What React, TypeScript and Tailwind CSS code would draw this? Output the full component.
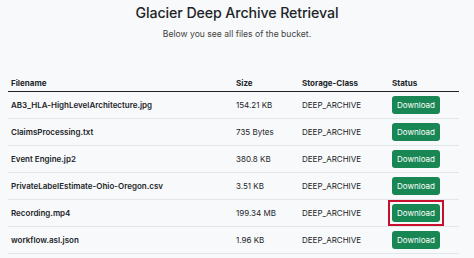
import React from "react";

const rows = [
  { name: "AB3_HLA-HighLevelArchitecture.jpg", size: "154.21 KB" },
  { name: "ClaimsProcessing.txt", size: "735 Bytes" },
  { name: "Event Engine.jp2", size: "380.8 KB" },
  { name: "PrivateLabelEstimate-Ohio-Oregon.csv", size: "3.51 KB" },
  { name: "Recording.mp4", size: "199.34 MB", highlight: true },
  { name: "workflow.asl.json", size: "1.96 KB" },
];

export default function App() {
  return (
    <div
      className="w-[474px] h-[258px] bg-[#f8f9fa] overflow-hidden text-[#212529]"
      style={{ fontFamily: "Inter, 'Liberation Sans', sans-serif" }}
    >
      <div className="flex flex-col items-center pt-[3px]">
        <h1 className="text-[14.2px] leading-[20px] font-medium tracking-[-0.1px]">Glacier Deep Archive Retrieval</h1>
        <p className="text-[8.6px] leading-[14px] mt-[4px] text-[#444]">Below you see all files of the bucket.</p>
      </div>
      <div className="px-[8px] mt-[34px] w-[467px]">
        <div className="grid grid-cols-[225px_66px_90px_1fr] h-[17px] items-center border-b-[1.5px] border-[#212529] text-[8px] font-bold">
          <div className="pl-[3px]">Filename</div>
          <div className="pl-[3px]">Size</div>
          <div className="pl-[3px]">Storage-Class</div>
          <div className="pl-[3px]">Status</div>
        </div>
        {rows.map((r) => (
          <div
            key={r.name}
            className="grid grid-cols-[225px_66px_90px_1fr] h-[27px] items-center border-b border-[#e3e5e8] text-[8px]"
          >
            <div className="pl-[3px] font-semibold">{r.name}</div>
            <div className="pl-[3px]">{r.size}</div>
            <div className="pl-[3px]">DEEP_ARCHIVE</div>
            <div className="pl-[3px] flex">
              {r.highlight ? (
                <div className="-ml-[4px] p-[2px] border-[2px] border-[#c8102e] -my-[4px]">
                  <button className="w-[48px] h-[18px] rounded-[3px] bg-[#198754] text-white text-[8px]">Download</button>
                </div>
              ) : (
                <button className="w-[48px] h-[18px] rounded-[3px] bg-[#198754] text-white text-[8px]">Download</button>
              )}
            </div>
          </div>
        ))}
      </div>
    </div>
  );
}
